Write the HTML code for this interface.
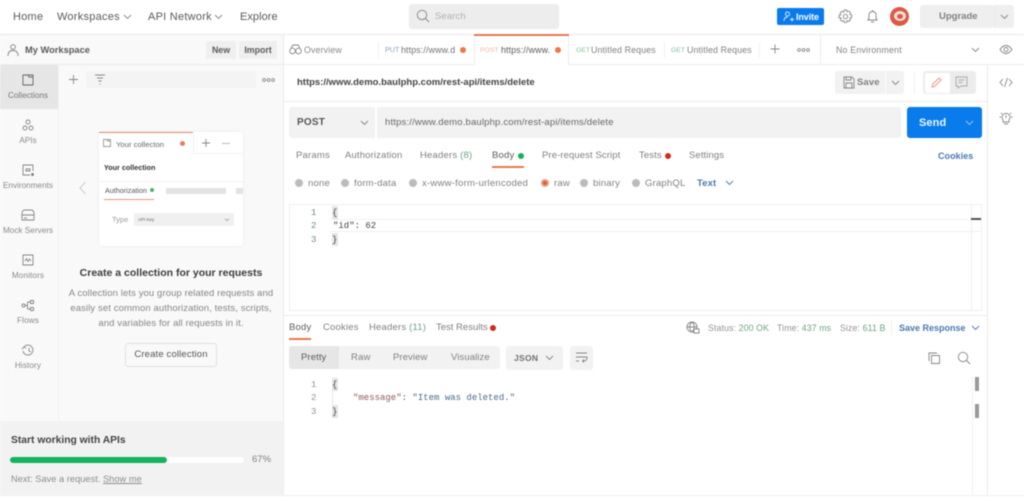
<!DOCTYPE html>
<html><head><meta charset="utf-8">
<style>
html,body{margin:0;padding:0;background:#fff}
#p{position:relative;width:1024px;height:497px;overflow:hidden;background:#fff;font-family:"Liberation Sans",sans-serif;color:#6b6b6b;filter:blur(.45px)}
.t{position:absolute;white-space:nowrap;font-size:9.5px;line-height:12px;letter-spacing:.2px}
.b{position:absolute}
.m{font-family:"Liberation Mono",monospace}
svg{position:absolute;fill:none;stroke:#858585;stroke-width:.9}
.d{position:absolute;border-radius:50%}
.r{position:absolute;width:8px;height:8px;border-radius:50%;background:#bcbcbc}
.c{text-align:center}
</style></head><body><div id="p">
<!-- top bar -->
<div class="t" style="left:13px;top:10.500px;font-size:11px;letter-spacing:.25px;color:#5a5a5a">Home</div>
<div class="t" style="left:57px;top:10.500px;font-size:11px;letter-spacing:.25px;color:#5a5a5a">Workspaces</div>
<svg style="left:123px;top:14px" width="9" height="6"><path d="M1 1l3.500 3.500L8 1"/></svg>
<div class="t" style="left:148px;top:10.500px;font-size:11px;letter-spacing:.25px;color:#5a5a5a">API Network</div>
<svg style="left:214px;top:14px" width="9" height="6"><path d="M1 1l3.500 3.500L8 1"/></svg>
<div class="t" style="left:240px;top:10.500px;font-size:11px;letter-spacing:.05px;color:#5a5a5a">Explore</div>
<div class="b" style="left:409px;top:4px;width:150px;height:25px;background:#ededed;border-radius:3px"></div>
<svg style="left:416px;top:9px" width="14" height="14"><circle cx="6" cy="6" r="4.700"/><path d="M9.500 9.500L13 13"/></svg>
<div class="t" style="left:435px;top:11px;color:#b0b0b0;font-size:9.500px;letter-spacing:.1px">Search</div>
<div class="b" style="left:777px;top:8px;width:47px;height:17px;background:#097bed;border-radius:2px"></div>
<svg style="left:783px;top:11px;stroke:#e3f0fd" width="11" height="11"><circle cx="4.500" cy="3" r="2"/><path d="M1 10c0-3 1.500-4 3.500-4M7 8.500h4M9 6.500v4"/></svg>
<div class="t" style="left:796px;top:11px;color:#fff;font-weight:bold;font-size:9px;letter-spacing:-.1px">Invite</div>
<svg style="left:838px;top:9px" width="15" height="15"><circle cx="7.500" cy="7.500" r="2.200"/><path d="M6.300 1h2.400l.5 1.800 1.700-.7 1.700 1.700-.7 1.700 1.800.5v2.400l-1.800.5.7 1.700-1.700 1.700-1.700-.7-.5 1.800H6.300l-.5-1.800-1.700.7-1.700-1.700.7-1.700L1 8.700V6.300l1.800-.5-.7-1.700 1.700-1.700 1.700.7z"/></svg>
<svg style="left:866px;top:9px" width="13" height="15"><path d="M2 11c1-1 1-2 1-5 0-2 1.500-3.500 3.500-3.500S10 4 10 6c0 3 0 4 1 5zM5 13h3M6.500 1v1.500"/></svg>
<div class="d" style="left:890px;top:7px;width:19px;height:19px;background:#dc5a44"></div>
<div class="d" style="left:893.500px;top:11px;width:12px;height:10px;background:#f0e2dc"></div>
<div class="d" style="left:896.500px;top:13.500px;width:6px;height:5px;background:#dc5a44"></div>
<div class="b" style="left:920px;top:5px;width:74px;height:23px;background:#efefef;border-radius:3px"></div>
<div class="b" style="left:994px;top:5px;width:1px;height:23px;background:#e8e8e8"></div>
<div class="b" style="left:995px;top:5px;width:19px;height:23px;background:#efefef;border-radius:0 3px 3px 0"></div>
<div class="t" style="left:939px;top:10.500px;font-weight:bold;color:#808080;letter-spacing:0;font-size:9.500px">Upgrade</div>
<svg style="left:1000px;top:14px" width="9" height="6"><path d="M1 1l3.500 3.500L8 1"/></svg>
<div class="b" style="left:0;top:34px;width:1024px;height:1px;background:#e8e8e8"></div>

<!-- sidebar -->
<div class="b" style="left:0;top:35px;width:283px;height:386px;background:#f9f9f9"></div>
<div class="b" style="left:0;top:64px;width:283px;height:1px;background:#ececec"></div>
<div class="b" style="left:58px;top:65px;width:1px;height:356px;background:#f1f1f1"></div>
<div class="b" style="left:283px;top:35px;width:1px;height:462px;background:#ececec"></div>
<svg style="left:7px;top:43px" width="12" height="14"><circle cx="6" cy="4" r="2.300"/><path d="M1 13c0-4 2-5.500 5-5.500s5 1.500 5 5.500"/></svg>
<div class="t" style="left:25px;top:44px;font-weight:bold;color:#5a5a5a;font-size:9.300px;letter-spacing:0">My Workspace</div>
<div class="b" style="left:206px;top:41px;width:30px;height:18px;background:#efefef;border-radius:2px"></div>
<div class="t c" style="left:206px;width:30px;top:44px;font-weight:bold;font-size:8.800px;color:#5a5a5a;letter-spacing:0">New</div>
<div class="b" style="left:239px;top:41px;width:38px;height:18px;background:#efefef;border-radius:2px"></div>
<div class="t c" style="left:239px;width:38px;top:44px;font-weight:bold;font-size:8.800px;color:#5a5a5a;letter-spacing:0">Import</div>
<div class="b" style="left:0;top:65px;width:58px;height:44px;background:#e6e6e6"></div>
<svg style="left:22px;top:74px;stroke:#666" width="12" height="12"><path d="M1 1h10v10H1zM6 1l1 2h4"/></svg>
<div class="t c" style="left:0;width:56px;top:90px;font-size:8.200px;letter-spacing:0;color:#777">Collections</div>
<svg style="left:22px;top:119px" width="12" height="12"><circle cx="6" cy="3" r="2"/><circle cx="3" cy="9" r="2"/><circle cx="9" cy="9" r="2"/></svg>
<div class="t c" style="left:0;width:56px;top:135px;font-size:8.200px;letter-spacing:0;color:#8a8a8a">APIs</div>
<svg style="left:22px;top:164px" width="12" height="13"><path d="M11 7V1H1v10h7M4 5h4v2H4z"/><circle cx="10.500" cy="10.500" r="1" fill="#666"/></svg>
<div class="t c" style="left:0;width:56px;top:180px;font-size:8.200px;letter-spacing:0;color:#8a8a8a">Environments</div>
<svg style="left:21px;top:209px" width="14" height="12"><path d="M1 5c0-3 1-4 3-4h6c2 0 3 1 3 4v6H1zM1 6h12M3 9h3"/></svg>
<div class="t c" style="left:0;width:56px;top:225px;font-size:8.200px;letter-spacing:0;color:#8a8a8a">Mock Servers</div>
<svg style="left:22px;top:254px" width="12" height="12"><path d="M1 1h10v10H1zM3 7l1.500-2.500L6 7.500 7.500 5 9 7"/></svg>
<div class="t c" style="left:0;width:56px;top:270px;font-size:8.200px;letter-spacing:.1px;color:#8a8a8a">Monitors</div>
<svg style="left:21px;top:299px" width="14" height="13"><circle cx="2.500" cy="6.500" r="1.500"/><path d="M9.500 1.500h3v3h-3zM9.500 8.500h3v3h-3zM4 6.500h2.500M6.500 3v7M6.500 3h3M6.500 10h3"/></svg>
<div class="t c" style="left:0;width:56px;top:315px;font-size:8.200px;letter-spacing:.1px;color:#8a8a8a">Flows</div>
<svg style="left:21px;top:344px" width="14" height="13"><path d="M3 3a5 5 0 1 1-1 4M1 5l2-2 2 1M8 4v3l2 1"/></svg>
<div class="t c" style="left:0;width:56px;top:360px;font-size:8.200px;letter-spacing:.1px;color:#8a8a8a">History</div>
<svg style="left:68px;top:74px" width="11" height="11"><path d="M5.500 1v9M1 5.500h9"/></svg>
<div class="b" style="left:86px;top:71px;width:170px;height:17px;background:#f4f4f4;border-radius:2px"></div>
<svg style="left:94px;top:74px" width="12" height="11"><path d="M1 1h10M3 4h6M4.500 7h3M5.500 10h1"/></svg>
<svg style="left:262px;top:77px" width="13" height="6"><circle cx="2" cy="3" r="1.400"/><circle cx="6.500" cy="3" r="1.400"/><circle cx="11" cy="3" r="1.400"/></svg>

<!-- illustration -->
<div class="b" style="left:99px;top:132px;width:144px;height:114px;background:#fff;border-radius:3px;box-shadow:0 0 2px #e8e8e8"></div>
<div class="b" style="left:99px;top:132px;width:94px;height:1px;background:#e08a68"></div>
<div class="b" style="left:193px;top:153px;width:50px;height:1px;background:#f2f2f2"></div>
<div class="b" style="left:193px;top:133px;width:1px;height:20px;background:#f2f2f2"></div>
<svg style="left:103px;top:139px;stroke:#999" width="9" height="9"><path d="M.5.500h7v7h-7zM4 .500l.5 1.500h3"/></svg>
<div class="t" style="left:116px;top:138.500px;font-size:7.700px;letter-spacing:0;color:#666">Your collecton</div>
<div class="d" style="left:180px;top:141px;width:5px;height:5px;background:#e0805a"></div>
<svg style="left:201px;top:138px" width="10" height="10"><path d="M5 1v8M1 5h8"/></svg>
<div class="b" style="left:222px;top:142.500px;width:8px;height:1.500px;background:#bbb"></div>
<div class="t" style="left:104px;top:161.500px;font-weight:bold;font-size:7.200px;letter-spacing:0;color:#333">Your collection</div>
<div class="b" style="left:99px;top:181px;width:144px;height:1px;background:#f2f2f2"></div>
<div class="t" style="left:105px;top:184.500px;font-size:7.200px;letter-spacing:0;color:#555">Authorization</div>
<div class="d" style="left:150px;top:188px;width:4px;height:4px;background:#4fae78"></div>
<div class="b" style="left:104px;top:199px;width:50px;height:1px;background:#e8967a"></div>
<div class="b" style="left:166px;top:188px;width:60px;height:6px;background:#e3e3e3"></div>
<div class="b" style="left:236px;top:188px;width:7px;height:6px;background:#e3e3e3"></div>
<div class="t" style="left:112px;top:214px;font-size:7.500px;letter-spacing:0;color:#999">Type</div>
<div class="b" style="left:134px;top:213px;width:100px;height:13px;background:#f0f0f0;border-radius:2px"></div>
<div class="t" style="left:138px;top:214px;font-size:4.500px;letter-spacing:0;color:#666">API Key</div>
<svg style="left:224px;top:218px;stroke:#aaa" width="6" height="4"><path d="M1 1l2 1.500L5 1"/></svg>
<svg style="left:79px;top:181px;stroke:#c4c4c4" width="8" height="14"><path d="M6.500 1L1 7l5.500 6"/></svg>
<div class="t c" style="left:59px;width:224px;top:267px;font-size:10.500px;font-weight:bold;color:#3c3c3c;letter-spacing:0">Create a collection for your requests</div>
<div class="t c" style="left:59px;width:224px;top:288px;font-size:9.500px;letter-spacing:.1px;color:#858585">A collection lets you group related requests and</div>
<div class="t c" style="left:59px;width:224px;top:303px;font-size:9.500px;letter-spacing:.1px;color:#858585">easily set common authorization, tests, scripts,</div>
<div class="t c" style="left:59px;width:224px;top:318px;font-size:9.500px;letter-spacing:.1px;color:#858585">and variables for all requests in it.</div>
<div class="b" style="left:125px;top:343px;width:90px;height:22px;border:1px solid #e0e0e0;border-radius:3px"></div>
<div class="t c" style="left:125px;width:92px;top:349px;color:#555;font-size:9.500px;letter-spacing:.15px">Create collection</div>

<!-- bottom panel -->
<div class="b" style="left:0;top:421px;width:283px;height:74px;background:#f2f2f2"></div>
<div class="t" style="left:11px;top:435px;font-weight:bold;font-size:10.300px;color:#444;letter-spacing:0">Start working with APIs</div>
<div class="b" style="left:10px;top:457px;width:234px;height:6px;background:#fff;border-radius:3px"></div>
<div class="b" style="left:10px;top:457px;width:157px;height:6px;background:#12b35a;border-radius:3px"></div>
<div class="t" style="left:252px;top:454px;font-size:9.500px;letter-spacing:0;color:#808080">67%</div>
<div class="t" style="left:11px;top:472.500px;color:#8c8c8c;font-size:9.300px;letter-spacing:0">Next: Save a request. <span style="text-decoration:underline">Show me</span></div>

<!-- tabs row -->
<div class="b" style="left:284px;top:64px;width:703px;height:1px;background:#ececec"></div>
<div class="b" style="left:987px;top:64px;width:37px;height:1px;background:#ececec"></div>
<svg style="left:289px;top:44px" width="13" height="11"><circle cx="3.500" cy="7" r="2.800"/><circle cx="9.500" cy="7" r="2.800"/><path d="M2 4l2-3h5l2 3"/></svg>
<div class="t" style="left:304px;top:44px;font-size:8.800px;letter-spacing:.15px;color:#888">Overview</div>
<div class="b" style="left:378px;top:42px;width:1px;height:16px;background:#f0f0f0"></div>
<div class="t" style="left:385px;top:44px;font-size:7.200px;letter-spacing:0;color:#8aa1c8">PUT</div>
<div class="t" style="left:401px;top:44px;font-size:8.800px;letter-spacing:.15px;color:#707070">https://www.d</div>
<div class="d" style="left:460px;top:47px;width:6px;height:6px;background:#e8794a"></div>
<div class="b" style="left:474px;top:35px;width:95px;height:30px;background:#fff;border-left:1px solid #ececec;border-right:1px solid #ececec;box-sizing:border-box"></div>
<div class="b" style="left:474px;top:34px;width:95px;height:1.500px;background:#e8794a"></div>
<div class="t" style="left:480px;top:44.500px;font-size:6.800px;letter-spacing:0;color:#f0b89a">POST</div>
<div class="t" style="left:501px;top:44px;font-size:8.800px;letter-spacing:.15px;color:#5a5a5a">https://www.</div>
<div class="d" style="left:555px;top:47px;width:6px;height:6px;background:#e8794a"></div>
<div class="t" style="left:576px;top:44.500px;font-size:6.800px;letter-spacing:0;color:#86bd9c">GET</div>
<div class="t" style="left:591px;top:44px;font-size:8.800px;letter-spacing:.15px;color:#808080;width:65px;overflow:hidden">Untitled Request</div>
<div class="b" style="left:664px;top:42px;width:1px;height:16px;background:#f0f0f0"></div>
<div class="t" style="left:671px;top:44.500px;font-size:6.800px;letter-spacing:0;color:#86bd9c">GET</div>
<div class="t" style="left:687px;top:44px;font-size:8.800px;letter-spacing:.15px;color:#808080;width:65px;overflow:hidden">Untitled Request</div>
<div class="b" style="left:759px;top:42px;width:1px;height:16px;background:#f0f0f0"></div>
<svg style="left:770px;top:44px" width="10" height="10"><path d="M5 .500v9M.500 5h9"/></svg>
<svg style="left:797px;top:47px" width="13" height="6"><circle cx="2" cy="3" r="1.400"/><circle cx="6.500" cy="3" r="1.400"/><circle cx="11" cy="3" r="1.400"/></svg>
<div class="b" style="left:820px;top:35px;width:1px;height:29px;background:#ececec"></div>
<div class="t" style="left:836px;top:43.500px;font-size:8.800px;letter-spacing:.2px;color:#808080">No Environment</div>
<svg style="left:971px;top:47px" width="9" height="6"><path d="M1 1l3.500 3.500L8 1"/></svg>
<svg style="left:999px;top:44px" width="14" height="11"><path d="M1 5.500C3 2.500 5 1.500 7 1.500s4 1 6 4c-2 3-4 4-6 4s-4-1-6-4z"/><circle cx="7" cy="5.500" r="2"/></svg>

<!-- url row -->
<div class="t" style="left:297px;top:76.500px;font-weight:bold;font-size:9.500px;letter-spacing:0;color:#444">https://www.demo.baulphp.com/rest-api/items/delete</div>
<div class="b" style="left:835px;top:71px;width:50px;height:23px;background:#f2f2f2;border-radius:3px 0 0 3px"></div>
<div class="b" style="left:886px;top:71px;width:18px;height:23px;background:#f2f2f2;border-radius:0 3px 3px 0"></div>
<svg style="left:843px;top:76px" width="12" height="13"><path d="M1 1h8l2 2v9H1zM3 1v3h5V1M3 12V7h6v5"/></svg>
<div class="t" style="left:857px;top:76.500px;font-weight:bold;font-size:9.500px;letter-spacing:.1px;color:#808080">Save</div>
<svg style="left:891px;top:80px" width="9" height="6"><path d="M1 1l3.500 3.500L8 1"/></svg>
<div class="b" style="left:914px;top:71px;width:1px;height:23px;background:#f0f0f0"></div>
<div class="b" style="left:923px;top:71px;width:53px;height:23px;background:#ececec;border-radius:3px"></div>
<div class="b" style="left:924.500px;top:72.500px;width:25px;height:20px;background:#fff;border-radius:2px"></div>
<svg style="left:930px;top:76px;stroke:#e8907a" width="13" height="13"><path d="M2 11l.500-2.500L9 2l2 2-6.500 6.500z"/></svg>
<svg style="left:955px;top:76px;stroke:#aaa" width="13" height="13"><path d="M1 1h11v9H6l-3 2v-2H1zM3.500 4h6M3.500 6.500h4"/></svg>
<div class="b" style="left:284px;top:101px;width:703px;height:1px;background:#ececec"></div>
<div class="b" style="left:987px;top:65px;width:1px;height:432px;background:#ececec"></div>
<svg style="left:999px;top:77px" width="14" height="11"><path d="M4 2L1 5.500 4 9M10 2l3 3.500L10 9M8.500 1l-3 9"/></svg>
<svg style="left:999px;top:111px" width="14" height="15"><path d="M4 9a4 4 0 1 1 6 0v2H4zM5 13h4M7 4v3M.500 6h1.500M12 6h1.500M2 2l1 1M12 2l-1 1"/></svg>

<!-- request row -->
<div class="b" style="left:289px;top:107px;width:86px;height:30.500px;background:#f2f2f2;border-radius:3px 0 0 3px"></div>
<div class="t" style="left:297px;top:117px;font-weight:bold;font-size:10px;letter-spacing:.2px;color:#555">POST</div>
<svg style="left:360px;top:120px" width="9" height="6"><path d="M1 1l3.500 3.500L8 1"/></svg>
<div class="b" style="left:377px;top:107px;width:524px;height:30.500px;background:#f2f2f2;border-radius:0 3px 3px 0"></div>
<div class="t" style="left:385px;top:117px;font-size:9.500px;letter-spacing:.17px;color:#666">https://www.demo.baulphp.com/rest-api/items/delete</div>
<div class="b" style="left:907px;top:107px;width:75px;height:30.500px;background:#097bed;border-radius:3px"></div>
<div class="t" style="left:919px;top:116.500px;font-weight:bold;font-size:11px;letter-spacing:.1px;color:#eef6fe">Send</div>
<svg style="left:965px;top:120px;stroke:#9cc9f6" width="9" height="6"><path d="M1 1l3.500 3.500L8 1"/></svg>

<!-- request tabs -->
<div class="t" style="left:296px;top:150px;color:#808080;letter-spacing:.2px">Params</div>
<div class="t" style="left:345px;top:150px;color:#808080;letter-spacing:.15px">Authorization</div>
<div class="t" style="left:420px;top:150px;color:#808080;letter-spacing:.2px">Headers <span style="color:#6ba584">(8)</span></div>
<div class="t" style="left:492px;top:150px;color:#5a5a5a;letter-spacing:.2px">Body</div>
<div class="d" style="left:518px;top:153px;width:6px;height:6px;background:#12b35a"></div>
<div class="b" style="left:492px;top:166px;width:32px;height:1.500px;background:#e8794a"></div>
<div class="t" style="left:542px;top:150px;color:#808080;letter-spacing:.1px">Pre-request Script</div>
<div class="t" style="left:639px;top:150px;color:#808080;letter-spacing:.1px">Tests</div>
<div class="d" style="left:665px;top:153px;width:6px;height:6px;background:#d0291e"></div>
<div class="t" style="left:689px;top:150px;color:#808080;letter-spacing:.1px">Settings</div>
<div class="t" style="left:938px;top:150px;color:#4a78ae;font-weight:bold;font-size:9px;letter-spacing:.05px">Cookies</div>

<!-- radios -->
<div class="r" style="left:295px;top:178.500px"></div><div class="t" style="left:308px;top:177.500px;color:#808080;letter-spacing:.2px">none</div>
<div class="r" style="left:341px;top:178.500px"></div><div class="t" style="left:354px;top:177.500px;color:#808080;letter-spacing:.2px">form-data</div>
<div class="r" style="left:409px;top:178.500px"></div><div class="t" style="left:422px;top:177.500px;color:#808080;letter-spacing:.25px">x-www-form-urlencoded</div>
<div class="r" style="left:541px;top:178.500px;background:#eaa085"></div><div class="d" style="left:543px;top:180.500px;width:4px;height:4px;background:#d9603a"></div><div class="t" style="left:554px;top:177.500px;color:#808080;letter-spacing:.2px">raw</div>
<div class="r" style="left:580px;top:178.500px"></div><div class="t" style="left:593px;top:177.500px;color:#808080;letter-spacing:.2px">binary</div>
<div class="r" style="left:632px;top:178.500px"></div><div class="t" style="left:645px;top:177.500px;color:#808080;letter-spacing:.2px">GraphQL</div>
<div class="t" style="left:697px;top:177.500px;color:#4a78ae;font-weight:bold;font-size:9.500px;letter-spacing:.1px">Text</div>
<svg style="left:725px;top:180px;stroke:#4a78ae" width="9" height="6"><path d="M1 1l3.500 3.500L8 1"/></svg>

<!-- editor -->
<div class="b" style="left:289px;top:204px;width:693px;height:107px;border:1px solid #efefef;box-sizing:border-box"></div>
<div class="b" style="left:284px;top:315px;width:703px;height:1px;background:#ececec"></div>
<div class="b" style="left:330px;top:219px;width:651px;height:13px;border-top:1px solid #efefef;border-bottom:1px solid #efefef;box-sizing:border-box"></div>
<div class="b" style="left:971px;top:205px;width:1px;height:105px;background:#f0f0f0"></div>
<div class="b" style="left:971px;top:218px;width:10px;height:1.500px;background:#555"></div>
<div class="t m" style="left:311px;top:206.500px;font-size:9px;letter-spacing:0;color:#6c8a90">1</div>
<div class="t m" style="left:311px;top:220px;font-size:9px;letter-spacing:0;color:#6c8a90">2</div>
<div class="t m" style="left:311px;top:233.500px;font-size:9px;letter-spacing:0;color:#6c8a90">3</div>
<div class="b" style="left:332px;top:206px;width:6px;height:13px;background:#e4e4e4"></div>
<div class="b" style="left:332px;top:233px;width:6px;height:13px;background:#e4e4e4"></div>
<div class="t m" style="left:332px;top:206.500px;font-size:9px;letter-spacing:0;color:#444">{</div>
<div class="t m" style="left:333px;top:220px;font-size:9px;letter-spacing:0;color:#444">"id": 62</div>
<div class="t m" style="left:332px;top:233.500px;font-size:9px;letter-spacing:0;color:#444">}</div>

<!-- response -->
<div class="t" style="left:289px;top:321.500px;color:#5a5a5a;letter-spacing:.2px">Body</div>
<div class="b" style="left:289px;top:338px;width:22px;height:1.500px;background:#e8794a"></div>
<div class="t" style="left:323px;top:321.500px;color:#808080;letter-spacing:.2px">Cookies</div>
<div class="t" style="left:369px;top:321.500px;color:#808080;letter-spacing:.2px">Headers <span style="color:#6ba584">(11)</span></div>
<div class="t" style="left:436px;top:321.500px;color:#808080;letter-spacing:0">Test Results</div>
<div class="d" style="left:490px;top:325px;width:6px;height:6px;background:#d0291e"></div>
<svg style="left:686px;top:321px" width="14" height="13"><circle cx="6" cy="6" r="5"/><path d="M1 6h10M6 1c-3 3-3 7 0 10M6 1c3 3 3 7 0 10"/><path d="M8 8h5v4H8z" fill="#fff"/></svg>
<div class="t" style="left:708px;top:322px;font-size:8.800px;letter-spacing:.1px;color:#949494">Status: <span style="color:#6ba584">200 OK</span></div>
<div class="t" style="left:777px;top:322px;font-size:8.800px;letter-spacing:.1px;color:#949494">Time: <span style="color:#6ba584">437 ms</span></div>
<div class="t" style="left:840px;top:322px;font-size:8.800px;letter-spacing:.1px;color:#949494">Size: <span style="color:#6ba584">611 B</span></div>
<div class="b" style="left:891px;top:320px;width:1px;height:15px;background:#f0f0f0"></div>
<div class="t" style="left:899px;top:321.500px;color:#4a78ae;font-weight:bold;font-size:9px;letter-spacing:0">Save Response</div>
<svg style="left:971px;top:325px;stroke:#4a78ae" width="9" height="6"><path d="M1 1l3.500 3.500L8 1"/></svg>

<div class="b" style="left:289px;top:346px;width:50px;height:22.500px;background:#e6e6e6;border-radius:3px 0 0 3px"></div>
<div class="b" style="left:339px;top:346px;width:161px;height:22.500px;background:#f2f2f2;border-radius:0 3px 3px 0"></div>
<div class="t" style="left:301px;top:351.500px;color:#5a5a5a;letter-spacing:.1px">Pretty</div>
<div class="t" style="left:351px;top:351.500px;color:#808080;letter-spacing:.2px">Raw</div>
<div class="t" style="left:393px;top:351.500px;color:#808080;letter-spacing:.1px">Preview</div>
<div class="t" style="left:451px;top:351.500px;color:#808080;letter-spacing:.1px">Visualize</div>
<div class="b" style="left:506px;top:346px;width:57px;height:24px;background:#f2f2f2;border-radius:3px"></div>
<div class="t" style="left:514px;top:352px;font-weight:bold;font-size:8.500px;letter-spacing:.3px;color:#707070">JSON</div>
<svg style="left:545px;top:355px" width="9" height="6"><path d="M1 1l3.500 3.500L8 1"/></svg>
<div class="b" style="left:570px;top:346px;width:23px;height:24px;background:#f2f2f2;border-radius:3px"></div>
<svg style="left:575px;top:352px" width="13" height="12"><path d="M1 1h11M1 5h11c0 4-2 4-4 4M9 7.500L7.500 9 9 10.500M1 9h3"/></svg>
<svg style="left:928px;top:352px" width="12" height="12"><path d="M3.500 3.500h8v8h-8zM1 9V1h8"/></svg>
<svg style="left:957px;top:351px" width="14" height="14"><circle cx="6" cy="6" r="4.700"/><path d="M9.500 9.500L13 13"/></svg>

<div class="t m" style="left:311px;top:378.500px;font-size:9px;letter-spacing:0;color:#909090">1</div>
<div class="t m" style="left:311px;top:392px;font-size:9px;letter-spacing:0;color:#909090">2</div>
<div class="t m" style="left:311px;top:405.500px;font-size:9px;letter-spacing:0;color:#909090">3</div>
<div class="b" style="left:332px;top:378px;width:6px;height:13px;background:#e4e4e4"></div>
<div class="b" style="left:332px;top:405px;width:6px;height:13px;background:#e4e4e4"></div>
<div class="b" style="left:332px;top:391px;width:1px;height:14px;background:#e8e8e8"></div>
<div class="t m" style="left:332px;top:378.500px;font-size:9px;letter-spacing:0;color:#444">{</div>
<div class="t m" style="left:353px;top:392px;font-size:9px;letter-spacing:0;color:#555"><span style="color:#8f5a5a">"message"</span>: <span style="color:#4a6a86">"Item was deleted."</span></div>
<div class="t m" style="left:332px;top:405.500px;font-size:9px;letter-spacing:0;color:#444">}</div>
<div class="b" style="left:972px;top:377px;width:1px;height:118px;background:#f0f0f0"></div>
<div class="b" style="left:975px;top:377px;width:4px;height:14px;background:#999"></div>
<div class="b" style="left:975px;top:404px;width:4px;height:14px;background:#999"></div>
<div class="b" style="left:0;top:495px;width:1024px;height:1px;background:#f0f0f0"></div>
</div></body></html>
